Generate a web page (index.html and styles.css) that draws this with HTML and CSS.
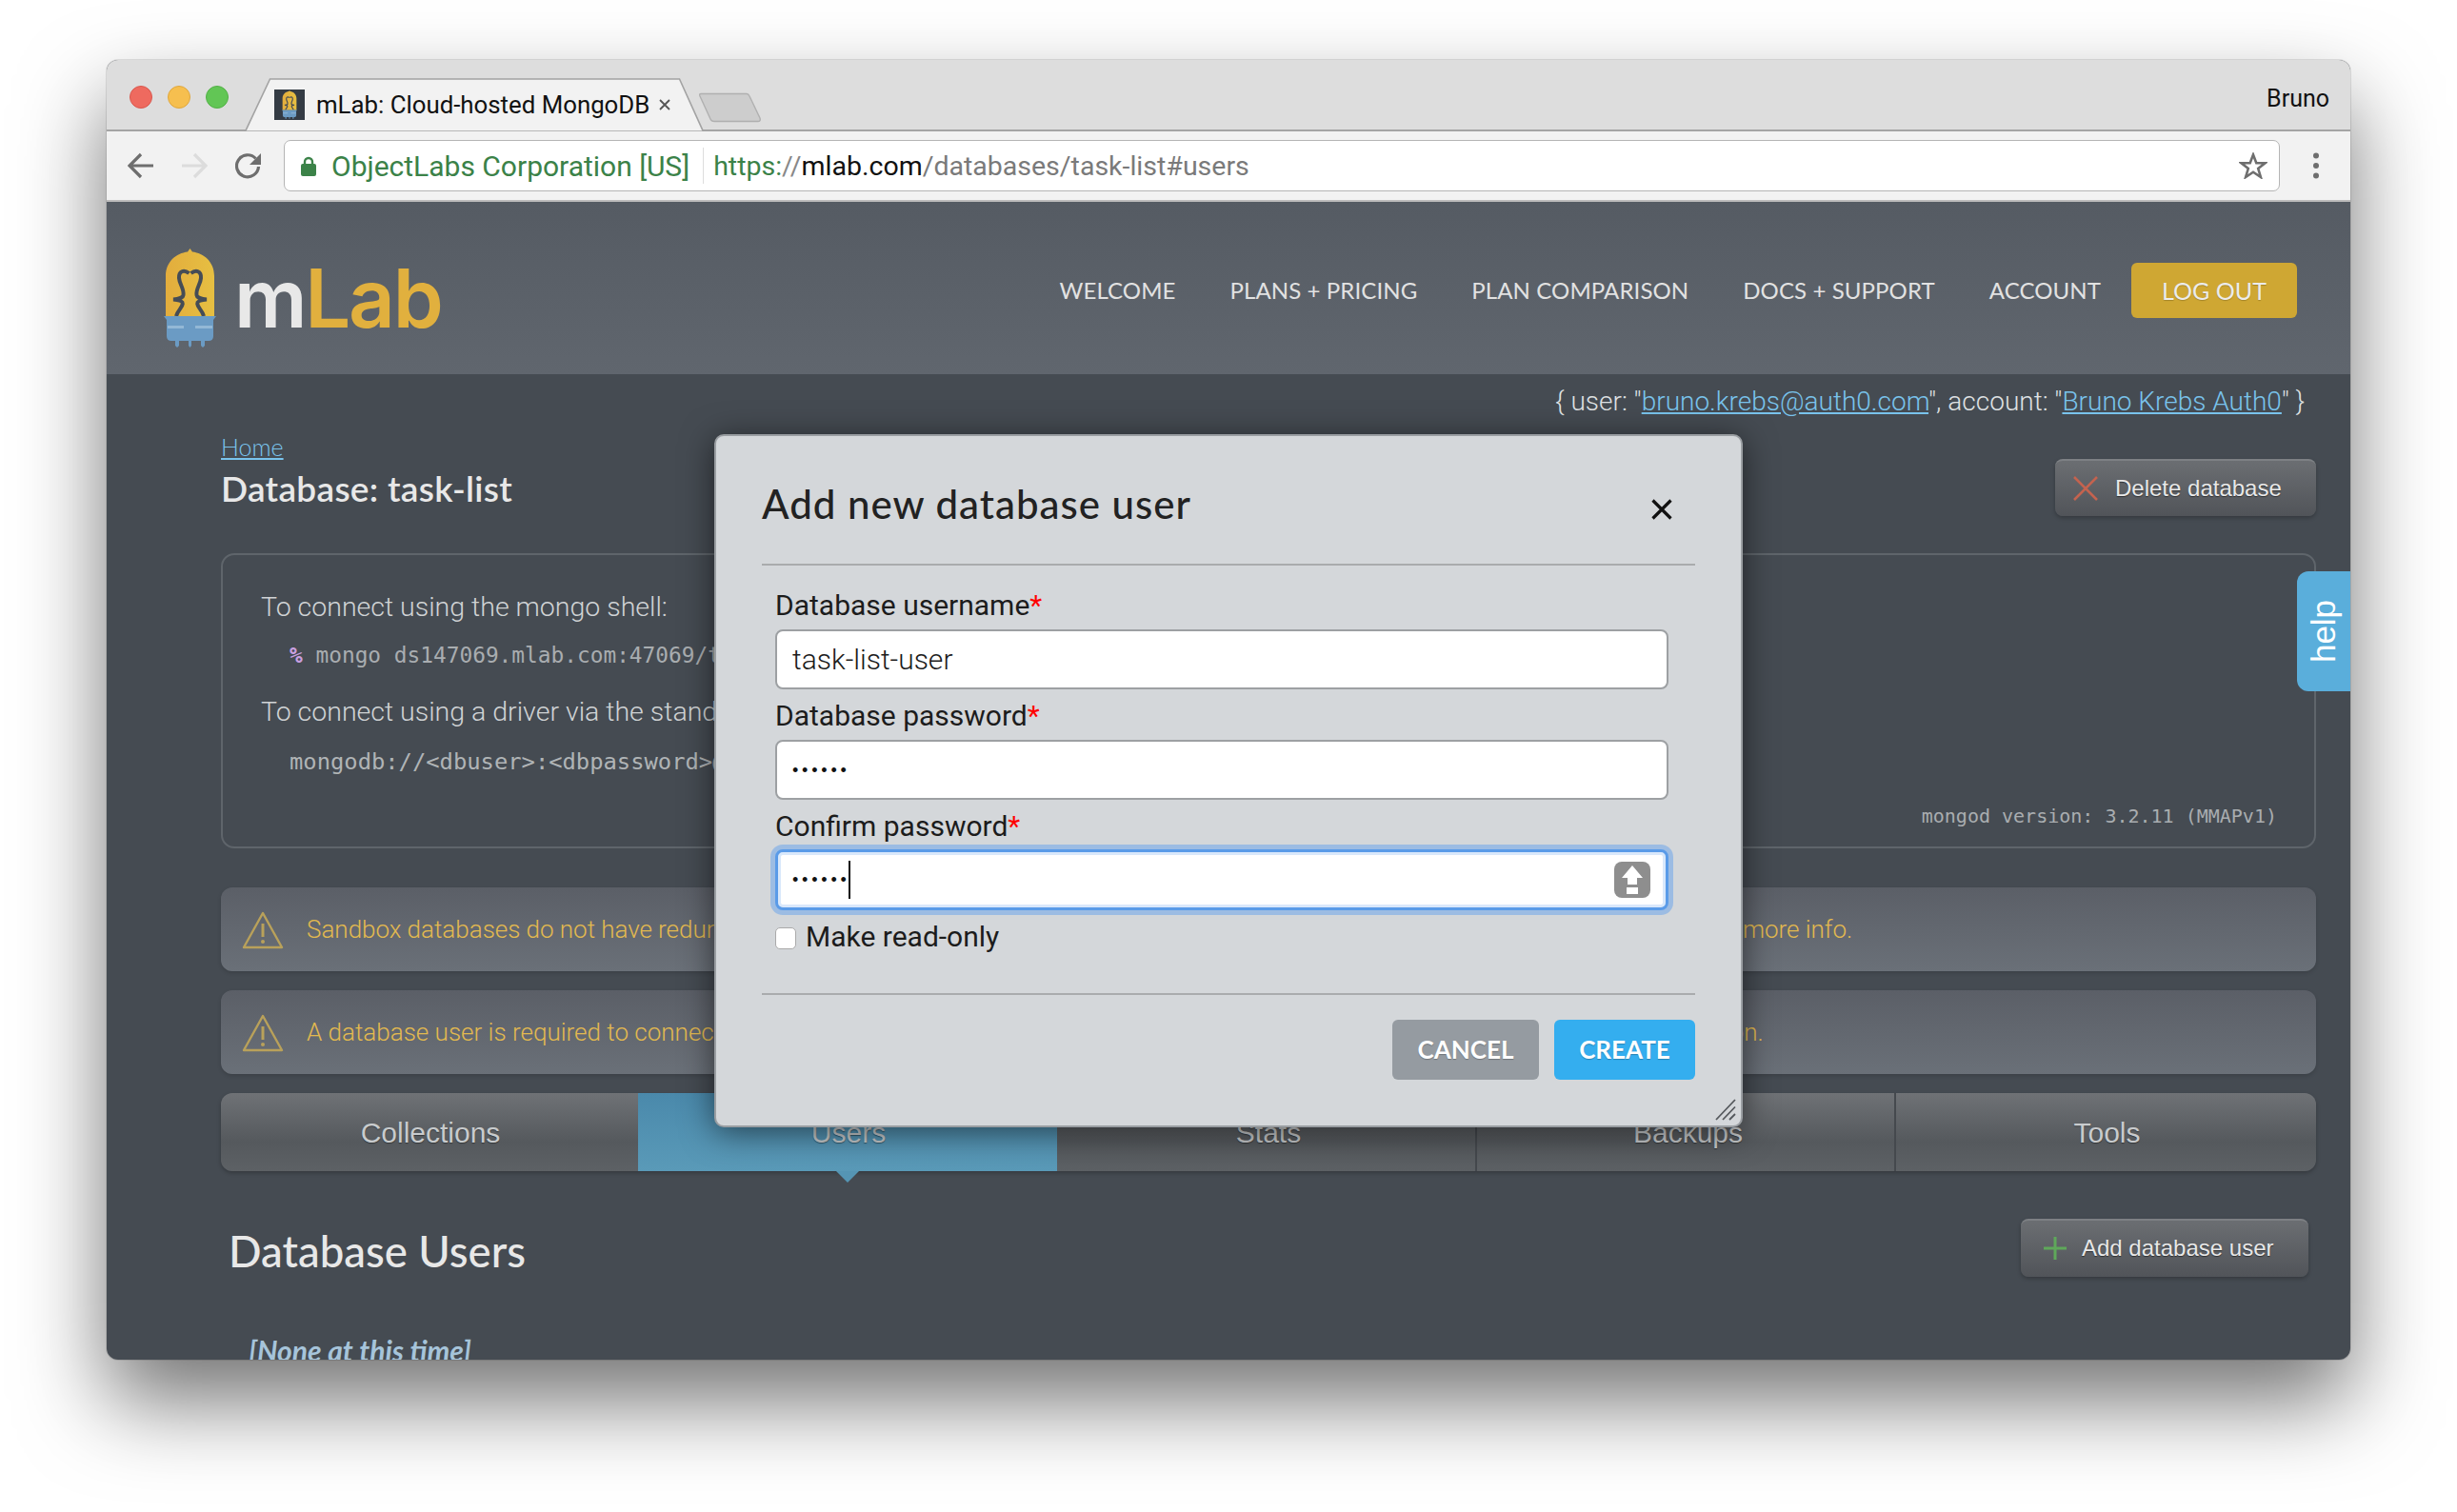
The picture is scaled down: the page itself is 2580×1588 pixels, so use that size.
FILE: index.html
```html
<!DOCTYPE html>
<html lang="en">
<head>
<meta charset="utf-8">
<title>mLab: Cloud-hosted MongoDB</title>
<link rel="stylesheet" href="styles.css">
</head>
<body>
<svg class="defs" width="0" height="0" aria-hidden="true">
  <defs>
    <linearGradient id="dome" x1="0" y1="0" x2="1" y2="0">
      <stop offset="0" stop-color="#e3ad3d"/><stop offset="1" stop-color="#e6bf42"/>
    </linearGradient>
    <symbol id="bulb" viewBox="0 0 55 104">
      <path fill="url(#dome)" d="M2 72V29C2 14 13 5 25 3.600L27.500 0L30 3.600C42 5 53 14 53 29V72Z"/>
      <g fill="none" stroke="#454c56" stroke-width="4">
        <path d="M26.500 26C21 21.500 15.500 24 16 31C16.500 38 21.500 42 20.500 49C20.300 51 16 53 10 53.500C16 54 20 55 19.800 58C19.500 62 14.500 65 13 71"/>
        <path d="M28.500 26C34 21.500 39.500 24 39 31C38.500 38 33.500 42 34.500 49C34.700 51 39 53 45 53.500C39 54 35 55 35.200 58C35.500 62 40.500 65 42 71"/>
      </g>
      <path fill="#6b9bc4" d="M0 71H55L52 75V92Q52 97 47 97H43V102L41 104L39 102V97H29V102L27.500 104L26 102V97H16V102L14 104L12 102V97H8Q3 97 3 92V75Z"/>
      <path fill="#93b8d6" d="M4 81H21V84H4ZM33 81H51V84H33Z"/>
    </symbol>
  </defs>
</svg>

<div class="window">
  <header class="tabstrip">
    <div class="lights">
      <span class="light light-red"></span>
      <span class="light light-yellow"></span>
      <span class="light light-green"></span>
    </div>
    <div class="tab">
      <svg class="tab-shape" width="483" height="56" viewBox="0 0 483 56"><path d="M0 55.200H2L27.500 1H457.500L482 55.200H483" fill="#f2f2f2" stroke="#a3a3a3" stroke-width="1.600"/></svg>
      <span class="favicon"><svg width="16" height="30" viewBox="0 0 55 104"><use href="#bulb"/></svg></span>
      <span class="tab-title">mLab: Cloud-hosted MongoDB</span>
      <svg class="tab-close" width="14" height="14" viewBox="0 0 14 14"><path d="M2 2L12 12M12 2L2 12" stroke="#555" stroke-width="1.800"/></svg>
    </div>
    <svg class="newtab" width="66" height="32" viewBox="0 0 66 32"><path d="M2 1.500H50Q52 1.500 53 4L64 27Q65 30.500 62 30.500H16Q13 30.500 12 28L1 4Q0 1.500 2 1.500Z" fill="#cdcdcd" stroke="#b0b0b0" stroke-width="1.400"/></svg>
    <span class="profile">Bruno</span>
  </header>

  <nav class="toolbar">
    <svg class="tool-back" width="28" height="28" viewBox="0 0 28 28"><path d="M27 14H3M14 2L2 14L14 26" fill="none" stroke="#6e6e6e" stroke-width="3.200"/></svg>
    <svg class="tool-fwd" width="28" height="28" viewBox="0 0 28 28"><path d="M1 14H25M14 2L26 14L14 26" fill="none" stroke="#dcdcdc" stroke-width="3.200"/></svg>
    <svg class="tool-reload" width="30" height="28" viewBox="0 0 30 28"><path d="M21.500 6.500A11.500 11.500 0 1 0 24.500 15" fill="none" stroke="#6e6e6e" stroke-width="3.200"/><path d="M27 1V13H15Z" fill="#6e6e6e"/></svg>
    <div class="omnibox">
      <svg class="lock" width="16" height="21" viewBox="0 0 16 21"><path d="M4 9V6A4 4 0 0 1 12 6V9" fill="none" stroke="#3b8248" stroke-width="2.400"/><rect y="8" width="16" height="13" rx="2" fill="#3b8248"/></svg>
      <span class="ev-name">ObjectLabs Corporation [US]</span>
      <span class="ev-sep"></span>
      <span class="url"><span class="url-scheme">https:</span><span class="url-slash">//</span><span class="url-host">mlab.com</span><span class="url-path">/databases/task-list#users</span></span>
      <svg class="star" width="30" height="28" viewBox="0 0 30 28"><path d="M15 2.500L18.300 11.300H27.500L20.200 17L22.900 26L15 20.700L7.100 26L9.800 17L2.500 11.300H11.700Z" fill="none" stroke="#6e6e6e" stroke-width="2.600"/></svg>
    </div>
    <svg class="menu" width="6" height="28" viewBox="0 0 6 28"><circle cx="3" cy="3.500" r="3" fill="#6e6e6e"/><circle cx="3" cy="14" r="3" fill="#6e6e6e"/><circle cx="3" cy="24.500" r="3" fill="#6e6e6e"/></svg>
  </nav>

  <main class="page">
    <div class="site-header">
      <div class="logo">
        <svg class="logo-bulb" width="55" height="104" viewBox="0 0 55 104"><use href="#bulb"/></svg>
        <span class="logo-text"><span class="logo-m">m</span><span class="logo-lab">Lab</span></span>
      </div>
      <div class="site-nav">
        <a class="nav-link">WELCOME</a>
        <a class="nav-link">PLANS + PRICING</a>
        <a class="nav-link">PLAN COMPARISON</a>
        <a class="nav-link">DOCS + SUPPORT</a>
        <a class="nav-link nav-last">ACCOUNT</a>
        <a class="logout">LOG OUT</a>
      </div>
    </div>

    <div class="content">
      <p class="userline">{ user: "<a>bruno.krebs@auth0.com</a>", account: "<a>Bruno Krebs Auth0</a>" }</p>

      <div class="title-row">
        <div>
          <a class="crumb">Home</a>
          <h1 class="db-title">Database: task-list</h1>
        </div>
        <button class="gray-btn delete-btn">
          <svg width="26" height="26" viewBox="0 0 26 26"><path d="M1 1L25 25M25 1L1 25" stroke="#c4634f" stroke-width="2.600"/></svg>
          <span>Delete database</span>
        </button>
      </div>

      <section class="conn-box">
        <p class="conn-text">To connect using the mongo shell:</p>
        <pre class="conn-code code-first"><span class="prompt">%</span> mongo ds147069.mlab.com:47069/task-list -u &lt;dbuser&gt; -p &lt;dbpassword&gt;</pre>
        <p class="conn-text conn-second">To connect using a driver via the standard MongoDB URI (what's this?):</p>
        <pre class="conn-code code-second">mongodb://&lt;dbuser&gt;:&lt;dbpassword&gt;@ds147069.mlab.com:47069/task-list</pre>
        <p class="version">mongod version: 3.2.11 (MMAPv1)</p>
      </section>

      <div class="warn warn-first">
        <svg class="warn-icon" width="44" height="40" viewBox="0 0 44 40"><path d="M22 2L42 38H2Z" fill="none" stroke="#b9a15a" stroke-width="2.400" stroke-linejoin="round"/><path d="M22 13V27" stroke="#b9a15a" stroke-width="3"/><circle cx="22" cy="32" r="2" fill="#b9a15a"/></svg>
        <span>Sandbox databases do not have redundancy and therefore must not be used for production. Click here to upgrade or see our docs for more info.</span>
      </div>
      <div class="warn">
        <svg class="warn-icon" width="44" height="40" viewBox="0 0 44 40"><path d="M22 2L42 38H2Z" fill="none" stroke="#b9a15a" stroke-width="2.400" stroke-linejoin="round"/><path d="M22 13V27" stroke="#b9a15a" stroke-width="3"/><circle cx="22" cy="32" r="2" fill="#b9a15a"/></svg>
        <span>A database user is required to connect to this database. Please click the 'Users' tab below, and then pick the 'Add database user' button.</span>
      </div>

      <div class="tabs">
        <a class="db-tab">Collections</a>
        <a class="db-tab db-tab-active">Users</a>
        <a class="db-tab db-tab-nudge">Stats</a>
        <a class="db-tab db-tab-div db-tab-nudge">Backups</a>
        <a class="db-tab db-tab-div">Tools</a>
      </div>

      <div class="users-row">
        <h2 class="users-title">Database Users</h2>
        <button class="gray-btn add-btn">
          <svg width="24" height="24" viewBox="0 0 24 24"><path d="M12 0V24M0 12H24" stroke="#5fa85a" stroke-width="3"/></svg>
          <span>Add database user</span>
        </button>
      </div>
      <p class="none-text">[None at this time]</p>
    </div>
  </main>

  <a class="help-tab"><span>help</span></a>

  <div class="modal">
    <div class="modal-head">
      <h3 class="modal-title">Add new database user</h3>
      <svg class="modal-close" width="22" height="22" viewBox="0 0 22 22"><path d="M1.500 1.500L20.500 20.500M20.500 1.500L1.500 20.500" stroke="#111" stroke-width="3.200"/></svg>
    </div>
    <form class="modal-form">
      <label class="field-label label-first">Database username<span class="req">*</span></label>
      <div class="field">task-list-user</div>
      <label class="field-label">Database password<span class="req">*</span></label>
      <div class="field"><span class="dots">••••••</span></div>
      <label class="field-label label-third">Confirm password<span class="req">*</span></label>
      <div class="field field-focus">
        <span class="dots">••••••</span><span class="caret"></span>
        <svg class="capslock" width="38" height="38" viewBox="0 0 38 38"><rect width="38" height="38" rx="8" fill="#8e8e8e"/><path d="M19 4L30 17H24V24H14V17H8Z" fill="#fff"/><rect x="13" y="27" width="12" height="7" fill="#fff"/></svg>
      </div>
      <label class="check-row"><input class="check" type="checkbox"><span>Make read-only</span></label>
    </form>
    <div class="modal-foot">
      <button class="m-btn m-cancel">CANCEL</button>
      <button class="m-btn m-create">CREATE</button>
    </div>
    <svg class="grip" width="22" height="23" viewBox="0 0 22 23"><path d="M1 22L21 1M8 22L21 8.500M15 22L21 16" stroke="#55595d" stroke-width="1.800"/></svg>
  </div>
</div>
</body>
</html>
```

FILE: styles.css
```css
* { box-sizing: border-box; }
html, body { margin: 0; padding: 0; }
body {
  width: 2580px;
  height: 1588px;
  background: #fff;
  padding: 63px 112px 0;
  overflow: hidden;
  font-family: "Liberation Sans", sans-serif;
}
.defs { position: absolute; }
p, h1, h2, h3, pre { margin: 0; font-weight: normal; }

.window {
  position: relative;
  width: 2356px;
  height: 1365px;
  border-radius: 12px;
  background: #454b52;
  box-shadow: 0 0 0 1px rgba(0,0,0,.1), 0 44px 90px rgba(0,0,0,.55);
  display: flex;
  flex-direction: column;
}

/* browser chrome */
.tabstrip {
  height: 75px;
  flex: none;
  background: #dddddd;
  border-radius: 12px 12px 0 0;
  border-bottom: 2px solid #a5a5a5;
  display: flex;
  align-items: flex-start;
  position: relative;
}
.lights { display: flex; gap: 16px; margin: 27px 0 0 24px; width: 120px; }
.light { width: 24px; height: 24px; border-radius: 50%; }
.light-red { background: #ee6a5f; border: 1px solid #d9574d; }
.light-yellow { background: #f6bf4f; border: 1px solid #dfa73d; }
.light-green { background: #62c655; border: 1px solid #52b046; }
.tab {
  position: relative;
  width: 483px;
  height: 56px;
  margin-top: 19px;
  z-index: 1;
  display: flex;
  align-items: flex-start;
}
.tab-shape { position: absolute; left: 0; top: 0; }
.favicon {
  position: relative;
  width: 32px; height: 32px;
  margin: 12px 0 0 32px;
  background: #343b44;
  display: flex; align-items: center; justify-content: center;
}
.tab-title {
  position: relative;
  margin: 11px 0 0 12px;
  font: 400 25.800px/34px Roboto, sans-serif;
  color: #111;
  white-space: nowrap;
}
.tab-close { position: relative; margin: 21px 0 0 9px; }
.newtab { margin: 34px 0 0 -5px; flex: none; }
.profile {
  margin-left: auto;
  margin-right: 22px;
  margin-top: 24px;
  font: 400 25px/34px Roboto, sans-serif;
  color: #111;
}
.toolbar {
  height: 74px;
  flex: none;
  background: #f2f2f2;
  border-bottom: 2px solid #bcbcbc;
  display: flex;
  align-items: center;
  position: relative;
}
.tool-back { margin-left: 22px; }
.tool-fwd { margin-left: 28px; }
.tool-reload { margin-left: 29px; }
.omnibox {
  width: 2096px;
  height: 54px;
  margin-left: 21px;
  background: #fff;
  border: 1.5px solid #b5b5b5;
  border-radius: 7px;
  display: flex;
  align-items: center;
  padding-left: 17px;
  position: relative;
  font: 400 28.500px/44px Roboto, sans-serif;
  white-space: nowrap;
}
.ev-name { color: #3b8248; margin-left: 16px; font-size: 30px; }
.ev-sep { width: 1px; height: 38px; background: #ddd; margin: 0 10px 0 14px; }
.url-scheme { color: #3b8248; }
.url-slash { color: #888; }
.url-host { color: #111; }
.url-path { color: #7a7a7a; }
.ev-name, .url { padding-top: 2px; }
.star { margin-left: auto; margin-right: 12px; }
.menu { margin-left: 35px; }

/* site */
.page {
  flex: 1;
  min-height: 0;
  overflow: hidden;
  border-radius: 0 0 12px 12px;
  display: flex;
  flex-direction: column;
}
.site-header {
  height: 181px;
  flex: none;
  background: linear-gradient(#555b63, #60666e);
  display: flex;
  justify-content: space-between;
  padding: 49px 56px 0 60px;
}
.logo { display: flex; align-items: flex-start; }
.logo-text {
  font: 600 85px/88px Inter, sans-serif;
  margin: 9px 0 0 19px;
  letter-spacing: -2.250px;
}
.logo-m { color: #e8e8e8; }
.logo-lab { color: #e1b03e; }
.site-nav { display: flex; align-items: center; height: 58px; margin-top: 15px; gap: 57px; }
.nav-link { font: 400 24px/34px Lato, sans-serif; letter-spacing: .1px; color: #e2e2e2; white-space: nowrap; }
.nav-last { margin-right: -25px; }
.logout {
  width: 174px; height: 58px;
  background: #cfa733;
  border-radius: 6px;
  font: 400 25px/58px Lato, sans-serif;
  color: #ececec;
  text-align: center;
  text-shadow: 0 1px 1px rgba(0,0,0,.2);
}

.content { flex: 1; min-height: 0; padding: 0 36px 0 120px; }
.userline {
  height: 58px;
  font: 300 28px/58px Roboto, sans-serif;
  text-align: right;
  margin-right: 12px;
  color: #dfe1e3;
  white-space: nowrap;
}
.userline a, .crumb { color: #79c3ec; text-decoration: underline; }
.title-row { height: 130px; display: flex; justify-content: space-between; align-items: flex-start; }
.crumb { display: block; font: 300 25px/36px Lato, sans-serif; }
.db-title { font: 600 37px/50px Lato, sans-serif; letter-spacing: .3px; color: #e8e8e8; margin-top: 1px; }
.gray-btn {
  display: flex;
  align-items: center;
  border: 0;
  border-top: 2px solid #7d8084;
  border-radius: 8px;
  background: linear-gradient(#6b6e72, #515459);
  color: #e8e8e8;
  font: 400 24px/30px "Liberation Sans", sans-serif;
  text-shadow: 0 1px 1px rgba(0,0,0,.5);
  box-shadow: 0 2px 4px rgba(0,0,0,.25);
  white-space: nowrap;
}
.delete-btn { width: 274px; height: 60px; margin-top: 31px; padding: 0 0 0 19px; gap: 18px; }

.conn-box {
  height: 310px;
  border: 2px solid #5f656b;
  border-radius: 14px;
  padding: 35px 40px 17px;
  display: flex;
  flex-direction: column;
  color: #d0d3d5;
}
.conn-text { font: 300 28.500px/40px Roboto, sans-serif; white-space: nowrap; }
.conn-second { margin-top: 20px; }
.conn-code {
  font: 400 22.800px/40px "DejaVu Sans Mono", monospace;
  color: #a9adb0;
  margin-left: 30px;
}
.code-first { margin-top: 10px; }
.code-second { margin-top: 12px; font-size: 23.800px; color: #b0b4b6; }
.prompt { color: #c9a0e0; font-weight: 700; }
.version {
  margin-top: auto;
  margin-right: -1px;
  align-self: flex-end;
  font: 400 20px/30px "DejaVu Sans Mono", monospace;
  color: #a9adb0;
}

.warn {
  height: 88px;
  margin-top: 20px;
  border-radius: 12px;
  background: linear-gradient(#5b5f67, #6a7078);
  box-shadow: 0 2px 4px rgba(0,0,0,.15);
  display: flex;
  align-items: center;
  padding: 0 0 0 22px;
  gap: 24px;
  font: 300 26px/36px Roboto, sans-serif;
  color: #e2b94f;
  white-space: nowrap;
}
.warn-first { margin-top: 41px; word-spacing: -.2px; }
.warn-icon { flex: none; margin-top: 2px; }

.tabs {
  height: 82px;
  margin-top: 20px;
  display: grid;
  grid-template-columns: 438px 440px 439px 440px 1fr;
  grid-template-rows: 82px;
  border-radius: 12px;
  background: linear-gradient(#6f7276, #55595d 62%, #5d6165);
  box-shadow: 0 2px 4px rgba(0,0,0,.25);
}
.db-tab {
  position: relative;
  font-size: 30px;
  line-height: 84px;
  padding-left: 2px;
  text-align: center;
  color: #c8cbcd;
  text-shadow: 0 1px 1px rgba(0,0,0,.4);
}
.db-tab-nudge { padding-left: 5px; }
.db-tab-div { border-left: 2px solid #45494e; }
.db-tab-active { background: linear-gradient(#4a89ab, #5a9ab8); }
.db-tab-active::after {
  content: "";
  position: absolute;
  left: 50%;
  top: 100%;
  margin-left: -12px;
  border: 12px solid transparent;
  border-bottom: 0;
  border-top-color: #5595b4;
}

.users-row { height: 61px; margin-top: 50px; display: flex; justify-content: space-between; padding: 0 8px 0 8px; }
.users-title { font: 500 45.500px/60px Lato, sans-serif; color: #e8e8e8; margin-top: 4px; }
.add-btn { width: 302px; height: 61px; padding: 0 0 2px 24px; gap: 16px; }
.none-text { margin: 57px 0 0 29px; font: italic 700 30px/40px Lato, sans-serif; color: #a6c4da; }

.help-tab {
  position: absolute;
  right: 0;
  top: 537px;
  width: 56px;
  height: 126px;
  background: #5aaedb;
  border-radius: 12px 0 0 12px;
  color: #fff;
  display: flex;
  align-items: center;
  justify-content: center;
  font-size: 35px;
}
.help-tab span { transform: rotate(-90deg); display: block; }

/* modal */
.modal {
  position: absolute;
  left: 638px;
  top: 393px;
  width: 1080px;
  height: 728px;
  background: #d4d7da;
  border: 2px solid #9a9ea2;
  border-radius: 10px;
  box-shadow: 0 5px 34px rgba(0,0,0,.55);
  padding: 0 48px;
}
.modal-head {
  height: 136px;
  border-bottom: 2px solid #a9abad;
  display: flex;
  align-items: center;
  justify-content: space-between;
  padding: 8px 10px 0 0;
}
.modal-title { font: 500 42px/56px Lato, sans-serif; letter-spacing: 1px; color: #222; }
.modal-close { margin-top: 11px; margin-right: 14px; }
.modal-form { padding-left: 14px; }
.field-label {
  display: block;
  font: 400 30px/40px Roboto, sans-serif;
  color: #1c1c1c;
  margin-top: 8px;
}
.label-first { margin-top: 22px; }
.label-third { margin-top: 8px; }
.req { color: #f00; }
.field {
  position: relative;
  width: 938px;
  height: 63px;
  margin-top: 5px;
  background: #fff;
  border: 2px solid #9da0a3;
  border-radius: 8px;
  padding-left: 16px;
  font: 300 30px/58px Roboto, sans-serif;
  color: #1c1c1c;
  display: flex;
  align-items: center;
}
.dots { font: 400 18px/58px "Liberation Sans", sans-serif; letter-spacing: 3.800px; color: #111; }
.field-focus {
  height: 64px;
  margin-top: 4px;
  border: 3px solid #5a9be8;
  box-shadow: 0 0 0 5px rgba(110,165,235,.55), inset 0 0 0 3px #d9e8fb;
  padding-left: 15px;
}
.caret { width: 2px; height: 40px; background: #111; margin-left: -2px; }
.capslock { margin-left: auto; margin-right: 16px; }
.check-row {
  display: flex;
  align-items: center;
  height: 36px;
  margin-top: 10px;
  font: 400 30px/36px Roboto, sans-serif;
  color: #1c1c1c;
}
.check {
  appearance: none;
  width: 22px;
  height: 23px;
  margin: 3px 10px 0 0;
  background: #fff;
  border: 1.5px solid #aaa;
  border-radius: 5px;
}
.modal-foot {
  margin-top: 41px;
  border-top: 2px solid #a9abad;
  padding-top: 26px;
  display: flex;
  justify-content: flex-end;
  gap: 16px;
}
.m-btn {
  height: 63px;
  border: 0;
  border-radius: 6px;
  color: #fff;
  font: 700 26px/63px Lato, sans-serif;
  text-shadow: 0 1px 1px rgba(0,0,0,.25);
  padding: 0;
}
.m-cancel { width: 154px; background: #959ba1; }
.m-create { width: 148px; background: #34aeef; }
.grip { position: absolute; right: 5px; bottom: 5px; }
```
